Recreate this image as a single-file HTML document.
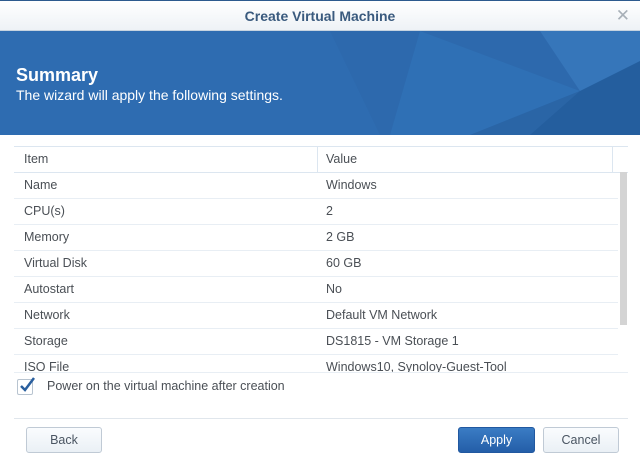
<!DOCTYPE html><html><head><style>
body{margin:0;width:640px;height:459px;overflow:hidden;background:#fff;font-family:"Liberation Sans",sans-serif;position:relative}
.t{position:absolute;left:0;top:0;width:640px;height:31px;background:linear-gradient(#fff,#eef2f6);border-top:1px solid #2d5a8e;border-bottom:1px solid #c6d3e0;box-sizing:border-box;text-align:center;font:bold 14px "Liberation Sans",sans-serif;color:#3a5a7e;line-height:30px}
.x{position:absolute;right:10px;top:0;color:#a8b0b8;font-size:17px;font-weight:normal}
.b{position:absolute;left:0;top:31px;width:640px;height:104px;background:#2e6cb1;overflow:hidden}
.b h1{position:absolute;left:16px;top:34px;margin:0;font-size:18px;color:#fff}
.b p{position:absolute;left:16px;top:56px;margin:0;font-size:14px;color:#fff}
.tb{position:absolute;left:14px;top:146px;width:614px;height:226px;overflow:hidden;border-top:1px solid #dce6f0}
.r{height:26px;border-bottom:1px solid #e8eef4;box-sizing:border-box;font-size:12.5px;color:#4a4f55;line-height:25px;position:relative;width:604px}
.r span{position:absolute;left:10px}.r span+span{left:312px}
.h{border-bottom:1px solid #dce6f0;width:614px}
.h:after{content:"";position:absolute;left:303px;top:0;height:25px;border-left:1px solid #dce6f0}
.h:before{content:"";position:absolute;left:598px;top:0;height:25px;border-left:1px solid #dce6f0}
.sb{position:absolute;left:620px;top:172px;width:7px;height:153px;background:#d4d4d4}
.btn{position:absolute;top:427px;height:26px;border:1px solid #c0cad5;border-radius:3px;background:linear-gradient(#fafcfe,#eaf0f5);box-sizing:border-box;font-size:12.5px;color:#4a5562;text-align:center;line-height:24px}
</style></head><body>
<div class="t">Create Virtual Machine<span class="x">✕</span></div>
<div class="b">
<svg width="640" height="104" style="position:absolute;left:0;top:0">
<polygon points="330,0 640,0 640,104 380,104" fill="#2d69ad"/>
<polygon points="420,0 580,60 470,104 390,104" fill="#3072b6" opacity=".8"/>
<polygon points="540,0 640,0 640,40 580,60" fill="#3a7cbf" opacity=".7"/>
<polygon points="580,60 640,30 640,104 520,104" fill="#245e9e"/>
<polygon points="470,104 580,60 530,104" fill="#2a65a6"/>
</svg>
<h1>Summary</h1><p>The wizard will apply the following settings.</p></div>
<div class="tb">
<div class="r h"><span>Item</span><span>Value</span></div>
<div class="r"><span>Name</span><span>Windows</span></div>
<div class="r"><span>CPU(s)</span><span>2</span></div>
<div class="r"><span>Memory</span><span>2 GB</span></div>
<div class="r"><span>Virtual Disk</span><span>60 GB</span></div>
<div class="r"><span>Autostart</span><span>No</span></div>
<div class="r"><span>Network</span><span>Default VM Network</span></div>
<div class="r"><span>Storage</span><span>DS1815 - VM Storage 1</span></div>
<div class="r"><span>ISO File</span><span>Windows10, Synoloy-Guest-Tool</span></div>
</div>
<div class="sb"></div>
<div style="position:absolute;left:14px;top:372px;width:614px;border-top:1px solid #e8eef4"></div>
<div style="position:absolute;left:17px;top:379px;width:14px;height:14px;border:1px solid #b8c4d0;border-radius:2px;background:#fff"></div>
<svg width="20" height="18" style="position:absolute;left:18px;top:375px"><path d="M3 11 L7 15 L16 3" stroke="#2a5f9e" stroke-width="2.5" fill="none"/></svg>
<div style="position:absolute;left:47px;top:379px;font-size:12.5px;color:#4a4f55">Power on the virtual machine after creation</div>
<div style="position:absolute;left:14px;top:418px;width:614px;border-top:1px solid #e0e6ec"></div>
<div class="btn" style="left:26px;width:76px">Back</div>
<div class="btn" style="left:458px;width:77px;background:linear-gradient(#3a7cc4,#245ea8);border-color:#2158a0;color:#fff">Apply</div>
<div class="btn" style="left:543px;width:76px">Cancel</div>
</body></html>
